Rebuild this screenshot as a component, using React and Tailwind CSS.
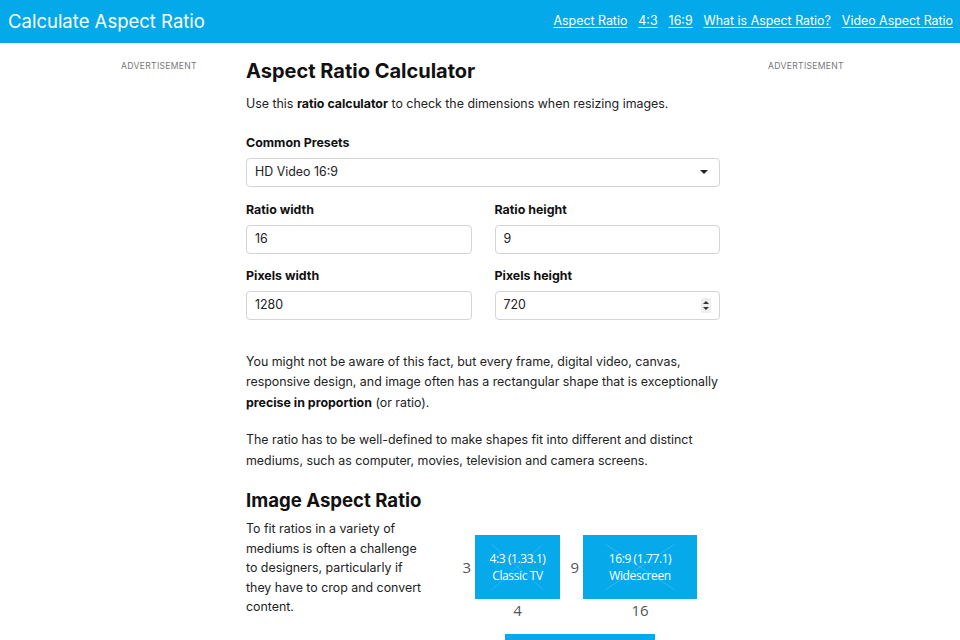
const links = ['Aspect Ratio', '4:3', '16:9', 'What is Aspect Ratio?', 'Video Aspect Ratio'];

function Field({ label, value, spinner }) {
  return (
    <div className="flex-1">
      <label className="block text-[12.4px] leading-[16px] font-bold text-[#111] mb-[7px]">{label}</label>
      <div className="h-[29px] border border-[#d4d4d4] rounded-[4px] flex items-center px-[8px] text-[12.4px] text-[#222]">
        <span className="flex-1">{value}</span>
        {spinner && (
          <span className="w-[10px] h-[15px] bg-[#eee] flex flex-col items-center justify-center gap-[3px] rounded-[2px]">
            <span className="w-0 h-0 border-l-[3px] border-r-[3px] border-b-[3px] border-l-transparent border-r-transparent border-b-[#333]" />
            <span className="w-0 h-0 border-l-[3px] border-r-[3px] border-t-[3px] border-l-transparent border-r-transparent border-t-[#333]" />
          </span>
        )}
      </div>
    </div>
  );
}

function RatioBox({ side, bottom, line1, line2, w }) {
  return (
    <div className="flex flex-col items-center">
      <div className="flex items-center gap-[4px]">
        <span className="text-[15px] text-[#555] w-[10px] text-right" style={{ fontFamily: '"Open Sans", sans-serif' }}>{side}</span>
        <div className={`${w} h-[64px] bg-[#06a9ea] relative flex flex-col items-center justify-center text-white text-[12px] tracking-[-0.4px] leading-[17px]`} style={{ fontFamily: '"Open Sans", sans-serif' }}>
          <svg className="absolute inset-0 w-full h-full" preserveAspectRatio="none" viewBox="0 0 100 100">
            <line x1="20" y1="15" x2="80" y2="85" stroke="rgba(255,255,255,0.25)" strokeWidth="0.8" />
            <line x1="80" y1="15" x2="20" y2="85" stroke="rgba(255,255,255,0.25)" strokeWidth="0.8" />
          </svg>
          <span className="relative">{line1}</span>
          <span className="relative">{line2}</span>
        </div>
      </div>
      <span className="text-[15px] leading-[20px] text-[#555] pl-[14px] mt-[1px]" style={{ fontFamily: '"Open Sans", sans-serif' }}>{bottom}</span>
    </div>
  );
}

export default function App() {
  return (
    <div className="min-h-[640px] bg-white text-[#222]" style={{ fontFamily: 'Inter, "Noto Sans", sans-serif' }}>
      <header className="h-[43px] bg-[#03a9e9] flex items-center justify-between pl-[8px] pr-[7px]">
        <div className="text-white text-[18.5px]">Calculate Aspect Ratio</div>
        <nav className="flex gap-[11px] text-[12.4px] text-white">
          {links.map(l => (
            <a key={l} href="#" className="underline underline-offset-2">{l}</a>
          ))}
        </nav>
      </header>

      <div className="flex pl-[72px]">
        <aside className="w-[174px] pt-[17px] text-center text-[8.6px] tracking-[0.3px] text-[#777]">ADVERTISEMENT</aside>

        <main className="w-[474px] pt-[14px]">
          <h1 className="text-[20px] font-bold text-[#111] leading-[28px]">Aspect Ratio Calculator</h1>
          <p className="text-[12.4px] mt-[10px]">Use this <b className="text-[#111]">ratio calculator</b> to check the dimensions when resizing images.</p>

          <label className="block text-[12.4px] leading-[16px] font-bold text-[#111] mt-[21px] mb-[7px]">Common Presets</label>
          <div className="h-[29px] border border-[#d4d4d4] rounded-[4px] flex items-center justify-between px-[8px] text-[12.4px]">
            <span>HD Video 16:9</span>
            <span className="w-0 h-0 border-l-[4px] border-r-[4px] border-t-[4px] border-l-transparent border-r-transparent border-t-[#222] mr-[3px]" />
          </div>

          <div className="flex gap-[23px] mt-[15px]">
            <Field label="Ratio width" value="16" />
            <Field label="Ratio height" value="9" />
          </div>
          <div className="flex gap-[23px] mt-[14px]">
            <Field label="Pixels width" value="1280" />
            <Field label="Pixels height" value="720" spinner />
          </div>

          <p className="text-[12.4px] leading-[20.5px] mt-[32px]">
            You might not be aware of this fact, but every frame, digital video, canvas, responsive design, and image often has a rectangular shape that is exceptionally <b className="text-[#111]">precise in proportion</b> (or ratio).
          </p>
          <p className="text-[12.4px] leading-[20.5px] mt-[17px]">
            The ratio has to be well-defined to make shapes fit into different and distinct mediums, such as computer, movies, television and camera screens.
          </p>

          <h2 className="text-[18.6px] font-bold text-[#111] mt-[16px] leading-[26px]">Image Aspect Ratio</h2>
          <div className="flex mt-[6px]">
            <p className="w-[185px] text-[12.4px] leading-[19.5px]">
              To fit ratios in a variety of mediums is often a challenge to designers, particularly if they have to crop and convert content.
            </p>
            <div className="flex-1 pl-[30px] pt-[16px]">
              <div className="flex gap-[9px]">
                <RatioBox side="3" bottom="4" line1="4:3 (1.33.1)" line2="Classic TV" w="w-[85px]" />
                <RatioBox side="9" bottom="16" line1="16:9 (1.77.1)" line2="Widescreen" w="w-[114px]" />
              </div>
              <div className="ml-[44px] mt-[14px] w-[150px] h-[20px] bg-[#06a9ea]" />
            </div>
          </div>
          <p className="text-[12.4px] text-[#222] -mt-[10px]">Instillation for</p>
        </main>

        <aside className="w-[172px] pt-[17px] text-center text-[8.6px] tracking-[0.3px] text-[#777]">ADVERTISEMENT</aside>
      </div>
    </div>
  );
}
